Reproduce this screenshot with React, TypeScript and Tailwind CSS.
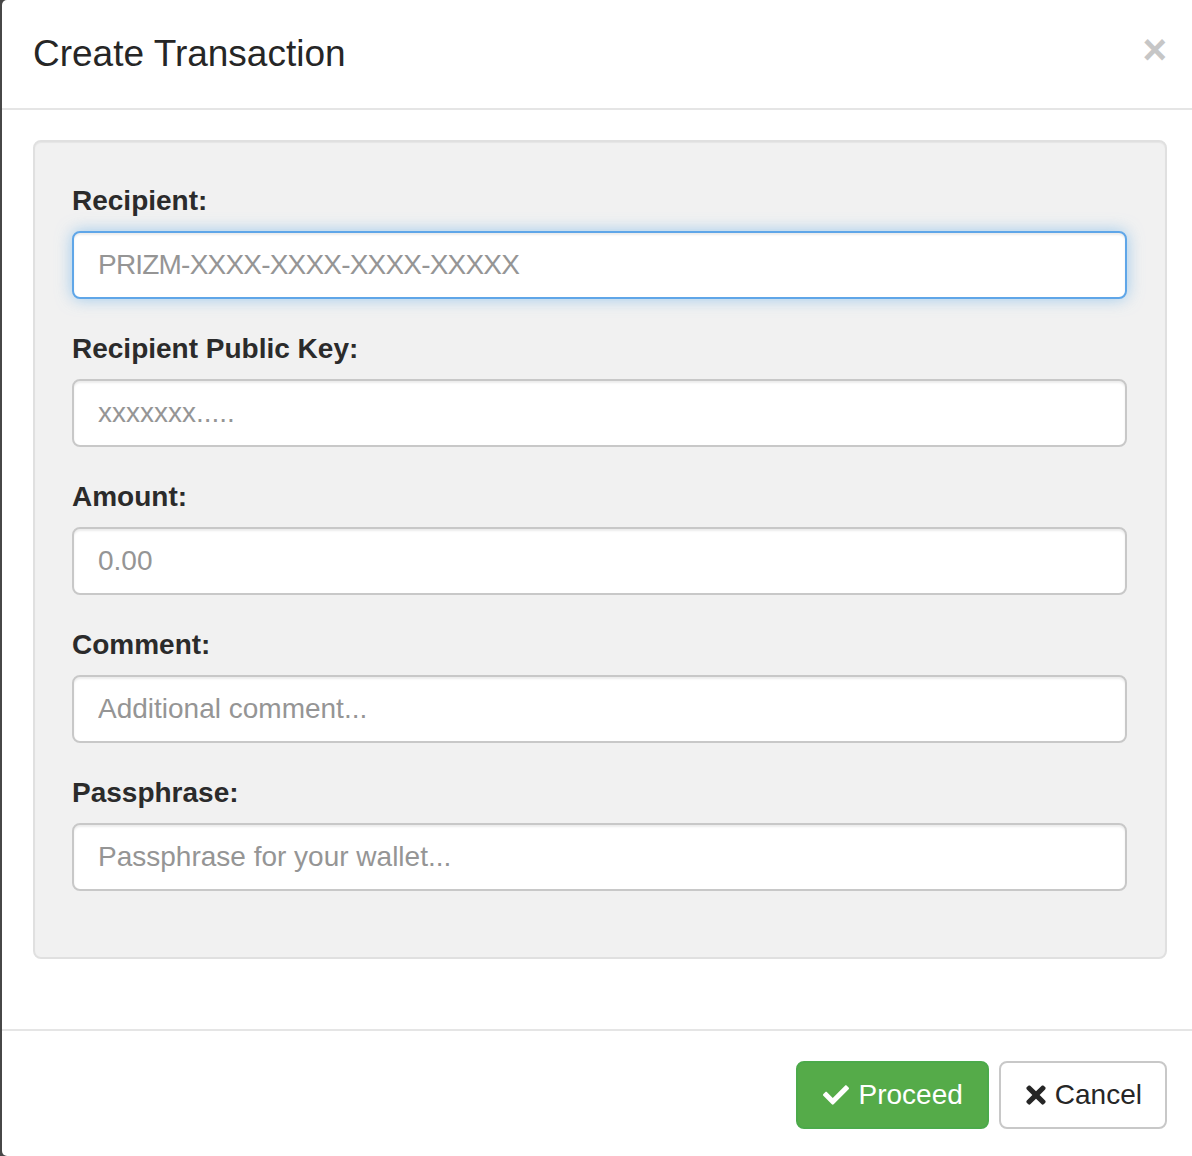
import React from "react";
import { FaCheck, FaTimes } from "react-icons/fa";

const font = { fontFamily: '"Liberation Sans", Arial, Helvetica, sans-serif' };

function Field({
  label,
  placeholder,
  focused = false,
  tight = false,
}: {
  label: string;
  placeholder: string;
  focused?: boolean;
  tight?: boolean;
}) {
  const base =
    "h-[68px] w-full rounded-[8px] border-2 bg-white px-[24px] text-[28px] text-[#555] outline-none placeholder:text-[#959595] ";
  const state = focused
    ? "border-[#5fa6e8] shadow-[inset_0_2px_2px_rgba(0,0,0,0.075),0_0_16px_rgba(102,175,233,0.6)]"
    : "border-[#c8c8c8] shadow-[inset_0_2px_2px_rgba(0,0,0,0.075)]";
  return (
    <div className="mb-[30px] flex flex-col">
      <label className="mb-[10px] text-[28px] font-bold leading-[40px] text-[#2b2b2b]">{label}</label>
      <input
        type="text"
        placeholder={placeholder}
        className={base + state + (tight ? " tracking-[-0.8px]" : "")}
        style={font}
      />
    </div>
  );
}

export default function App() {
  return (
    <div className="flex h-[1156px] w-[1192px] overflow-hidden bg-[#474747]" style={font}>
      <div className="ml-[2px] flex h-full flex-1 flex-col rounded-l-[5px] bg-white">
        {/* Header */}
        <div className="flex items-start justify-between border-b-2 border-[#e5e5e5] pl-[31px] pr-[26px] pt-[28px] pb-[29px]">
          <h4 className="text-[37px] leading-[51px] font-normal text-[#262626]">Create Transaction</h4>
          <button className="mt-[-4px] mr-[-1px] text-[42px] font-bold leading-[51px] text-[#c6c6c6]">×</button>
        </div>

        {/* Body */}
        <div className="pl-[31px] pr-[25px] pt-[30px] pb-[30px]">
          <div className="mb-[40px] rounded-[8px] border-2 border-[#e0e0e0] bg-[#f1f1f1] pt-[39px] pb-[36px] pl-[37px] pr-[38px] shadow-[inset_0_1px_1px_rgba(0,0,0,0.05)]">
            <Field label="Recipient:" placeholder="PRIZM-XXXX-XXXX-XXXX-XXXXX" focused tight />
            <Field label="Recipient Public Key:" placeholder="xxxxxxx....." />
            <Field label="Amount:" placeholder="0.00" />
            <Field label="Comment:" placeholder="Additional comment..." />
            <Field label="Passphrase:" placeholder="Passphrase for your wallet..." />
          </div>
        </div>

        {/* Footer */}
        <div className="flex justify-end gap-[10px] border-t-2 border-[#e5e5e5] pl-[31px] pr-[25px] pt-[30px]">
          <button className="flex h-[68px] items-center gap-[10px] rounded-[8px] border-2 border-[#4caa4a] bg-[#55ab49] pl-[25px] pr-[24px] text-[28px] leading-[40px] text-white">
            <FaCheck className="h-[26px] w-[26px]" />
            <span>Proceed</span>
          </button>
          <button className="flex h-[68px] items-center gap-[9px] rounded-[8px] border-2 border-[#c8c8c8] bg-white pl-[25px] pr-[23px] text-[28px] leading-[40px] text-[#262626]">
            <FaTimes className="h-[28px] w-[20px]" />
            <span>Cancel</span>
          </button>
        </div>
      </div>
    </div>
  );
}
